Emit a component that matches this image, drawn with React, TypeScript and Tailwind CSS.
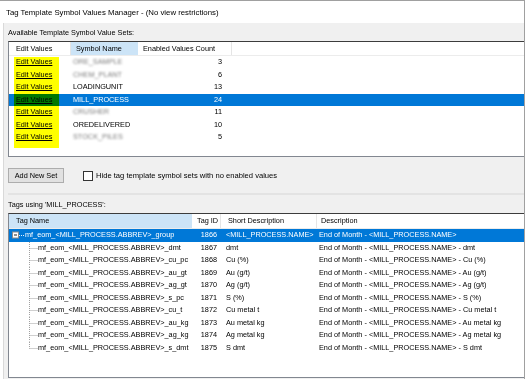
import React from "react";

const symbolSets = [
  { name: "ORE_SAMPLE", count: 3, blurred: true },
  { name: "CHEM_PLANT", count: 6, blurred: true },
  { name: "LOADINGUNIT", count: 13 },
  { name: "MILL_PROCESS", count: 24, selected: true },
  { name: "CRUSHER", count: 11, blurred: true },
  { name: "OREDELIVERED", count: 10 },
  { name: "STOCK_PILES", count: 5, blurred: true },
];

const childTags = [
  { id: 1867, suffix: "dmt", short: "dmt" },
  { id: 1868, suffix: "cu_pc", short: "Cu (%)" },
  { id: 1869, suffix: "au_gt", short: "Au (g/t)" },
  { id: 1870, suffix: "ag_gt", short: "Ag (g/t)" },
  { id: 1871, suffix: "s_pc", short: "S (%)" },
  { id: 1872, suffix: "cu_t", short: "Cu metal t" },
  { id: 1873, suffix: "au_kg", short: "Au metal kg" },
  { id: 1874, suffix: "ag_kg", short: "Ag metal kg" },
  { id: 1875, suffix: "s_dmt", short: "S dmt" },
];

function TreeLines({ last }: { last: boolean }) {
  return (
    <svg width="29" height="12.5" className="shrink-0">
      <line x1="20.5" y1="0" x2="20.5" y2={last ? 6.5 : 12.5} stroke="#a0a0a0" strokeDasharray="1 1" />
      <line x1="20.5" y1="6.5" x2="29" y2="6.5" stroke="#a0a0a0" strokeDasharray="1 1" />
    </svg>
  );
}

function RootGlyph() {
  return (
    <svg width="16" height="12.5" className="shrink-0">
      <rect x="3.5" y="3" width="6" height="6" fill="#ffffff" stroke="#8c8c8c" />
      <line x1="5" y1="6" x2="8" y2="6" stroke="#1f1f1f" />
      <line x1="10" y1="6.5" x2="16" y2="6.5" stroke="#e6f0fa" strokeDasharray="1 1" />
    </svg>
  );
}

export default function App() {
  return (
    <div className="w-[527px] h-[379px] bg-white text-black text-[7.3px] font-['Liberation_Sans',Arial,sans-serif] overflow-hidden">
      <div className="w-[525px] h-full border-t border-r border-[#a0a0a0] flex flex-col">
        {/* Title */}
        <div className="h-[22px] pl-[6px] flex items-center text-[7.8px] pt-[2px]">
          Tag Template Symbol Values Manager - (No view restrictions)
        </div>

        {/* Dialog body */}
        <div className="flex-1 min-h-0 ml-[3px] border-l border-[#d9d9d9] bg-[#f0f0f0] pl-[4px] pb-[1px] flex flex-col">
          <div className="h-[18px] pt-[4px] leading-[12px]">Available Template Symbol Value Sets:</div>

          {/* Symbol sets list */}
          <div className="relative h-[116px] bg-white border-t border-l border-b border-t-[#3c3c3c] border-l-[#828790] border-b-[#828790] flex flex-col">
            <div className="h-[14px] flex border-b border-[#ececec] leading-[13px]">
              <div className="w-[62px] pl-[7px] border-r border-[#e5e5e5]">Edit Values</div>
              <div className="w-[67px] pl-[5px] bg-[#cce4f7]">Symbol Name</div>
              <div className="w-[94px] pl-[5px] border-r border-[#e5e5e5]">Enabled Values Count</div>
              <div className="flex-1" />
            </div>
            {symbolSets.map((s) => (
              <div
                key={s.name}
                className={`h-[12.5px] leading-[12.5px] flex ${s.selected ? "bg-[#0078d7] text-white" : ""}`}
              >
                <div className="w-[62px] pl-[7px] text-black underline">Edit Values</div>
                <div className="w-[67px] pl-[2px]">
                  {s.blurred ? (
                    <span className="text-[#7c7c7c] blur-[1px]">{s.name}</span>
                  ) : (
                    s.name
                  )}
                </div>
                <div className="w-[94px] pr-[10px] text-right">{s.count}</div>
                <div className="flex-1" />
              </div>
            ))}
            {/* Yellow annotation highlight */}
            <div className="absolute left-[5px] top-[15px] w-[45px] h-[91px] bg-[#ffff00] mix-blend-multiply pointer-events-none" />
          </div>

          {/* Button row */}
          <div className="mt-[11px] h-[15px] flex items-center">
            <button className="w-[56px] h-[15px] border border-[#adadad] bg-[#e1e1e1] leading-[13px] text-center">
              Add New Set
            </button>
            <div className="ml-[19px] w-[10px] h-[10px] border border-[#333333] bg-white" />
            <span className="ml-[3px] text-[7.6px]">Hide tag template symbol sets with no enabled values</span>
          </div>

          <div className="mt-[10px] h-[2px] bg-[#e3e3e3]" />

          <div className="h-[18px] pt-[4px] leading-[12px]">Tags using 'MILL_PROCESS':</div>

          {/* Tags tree list */}
          <div className="flex-1 min-h-0 bg-white border-t border-l border-b border-t-[#3c3c3c] border-l-[#828790] border-b-[#828790] flex flex-col">
            <div className="h-[15px] flex border-b border-[#ececec] leading-[14px]">
              <div className="w-[183px] pl-[7px] bg-[#cce4f7]">Tag Name</div>
              <div className="w-[29px] pl-[5px] border-r border-[#e5e5e5]">Tag ID</div>
              <div className="w-[96px] pl-[7px] border-r border-[#e5e5e5]">Short Description</div>
              <div className="flex-1 pl-[4px]">Description</div>
            </div>

            <div className="h-[12.5px] leading-[12.5px] flex bg-[#0078d7] text-white">
              <div className="w-[183px] flex">
                <RootGlyph />
                <span>mf_eom_&lt;MILL_PROCESS.ABBREV&gt;_group</span>
              </div>
              <div className="w-[29px] pr-[4px] text-right">1866</div>
              <div className="w-[96px] pl-[5px]">&lt;MILL_PROCESS.NAME&gt;</div>
              <div className="flex-1 pl-[2px]">End of Month - &lt;MILL_PROCESS.NAME&gt;</div>
            </div>

            {childTags.map((t, i) => (
              <div key={t.id} className="h-[12.5px] leading-[12.5px] flex">
                <div className="w-[183px] flex">
                  <TreeLines last={i === childTags.length - 1} />
                  <span>mf_eom_&lt;MILL_PROCESS.ABBREV&gt;_{t.suffix}</span>
                </div>
                <div className="w-[29px] pr-[4px] text-right">{t.id}</div>
                <div className="w-[96px] pl-[5px]">{t.short}</div>
                <div className="flex-1 pl-[2px]">End of Month - &lt;MILL_PROCESS.NAME&gt; - {t.short}</div>
              </div>
            ))}
          </div>
        </div>
      </div>
    </div>
  );
}
